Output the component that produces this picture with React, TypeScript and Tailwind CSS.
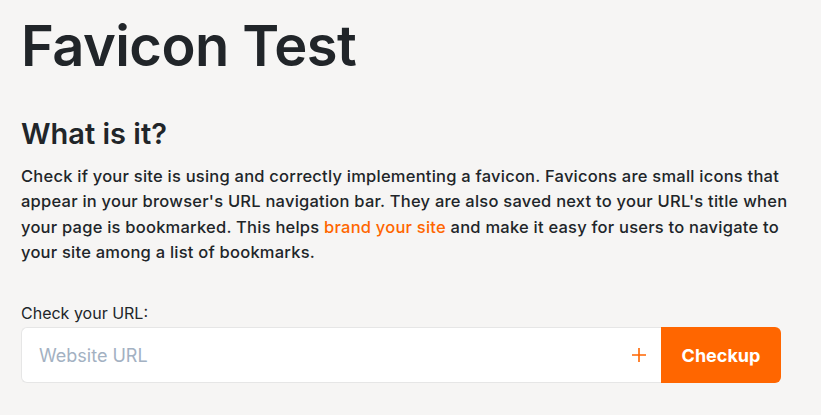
import React from "react";

export default function App() {
  return (
    <div
      className="min-h-screen bg-[#f6f5f4] text-[#212529] overflow-hidden"
      style={{ fontFamily: "Inter, 'Noto Sans', sans-serif" }}
    >
      <div className="w-[760px] ml-[21px] pt-[14px]">
        <h1 className="text-[56px] leading-[64px] font-semibold tracking-[-0.01em]">Favicon Test</h1>

        <h2 className="mt-[38px] text-[29px] leading-[36px] font-semibold">What is it?</h2>
        <p className="mt-[12px] text-[16.5px] leading-[25.3px] font-medium tracking-[0.014em] whitespace-nowrap">
          Check if your site is using and correctly implementing a favicon. Favicons are small icons that
          <br />
          appear in your browser's URL navigation bar. They are also saved next to your URL's title when
          <br />
          your page is bookmarked. This helps{" "}
          <a href="#" className="text-[#ff6600]">brand your site</a> and make it easy for users to navigate to
          <br />
          your site among a list of bookmarks.
        </p>

        <label className="block mt-[38px] text-[16px] leading-[20px]">Check your URL:</label>
        <div className="mt-[4px] flex h-[56px]">
          <div className="flex-1 flex items-center bg-white border border-[#e6e6e6] border-r-0 rounded-l-[6px] pl-[17px] pr-[14px]">
            <input
              type="text"
              placeholder="Website URL"
              className="flex-1 bg-transparent outline-none text-[18px] placeholder:text-[#a3b1c2]"
            />
            <svg width="16" height="16" viewBox="0 0 16 16" className="text-[#ff6600]">
              <path d="M8 1v14M1 8h14" stroke="currentColor" strokeWidth="1.6" fill="none" />
            </svg>
          </div>
          <button className="w-[120px] bg-[#ff6600] text-white text-[18px] font-bold rounded-r-[6px]">
            Checkup
          </button>
        </div>
      </div>
    </div>
  );
}
